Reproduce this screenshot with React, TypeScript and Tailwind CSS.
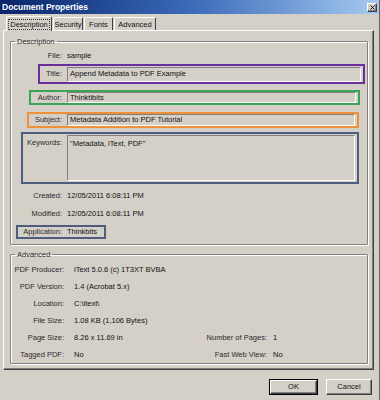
import { X } from "lucide-react";

const raised =
  "border border-t-white border-l-white border-b-[#404040] border-r-[#404040] shadow-[inset_-1px_-1px_0_#808080]";
const sunken = "border border-t-[#808080] border-l-[#808080] border-b-white border-r-white";

const Field = ({ label, value, w = 51 }: { label: string; value: string; w?: number }) => (
  <div className="flex items-center h-[10px]">
    <span className="text-right text-[#2a2a2a]" style={{ width: w }}>
      {label}
    </span>
    <span className="ml-[5px]">{value}</span>
  </div>
);

const Tab = ({ label, active, w }: { label: string; active?: boolean; w: number }) => (
  <div
    className={`flex items-center justify-center border-l border-t border-r border-l-white border-t-white border-r-[#404040] rounded-t-[2px] ${
      active ? "h-[15px] bg-[#d4d0c8] -mb-px z-10" : "h-[13px]"
    }`}
    style={{ width: w }}
  >
    <span className={active ? "outline outline-1 outline-dotted outline-[#333] px-[1px] leading-[9px]" : "leading-[9px]"}>
      {label}
    </span>
  </div>
);

export default function App() {
  return (
    <div className="w-[380px] h-[400px] bg-[#d4d0c8] flex flex-col overflow-hidden border-r border-r-[#606060] text-[7.5px] text-[#111] font-['Liberation_Sans',Arial,sans-serif]">
      {/* title bar */}
      <div className="h-[14px] flex items-center justify-between pl-[2px] pr-[2px] bg-gradient-to-r from-[#0a246a] via-[#3a6ab8] to-[#a6caf0]">
        <span className="text-white font-bold text-[8.5px]">Document Properties</span>
        <div className={`w-[10px] h-[9px] bg-[#d4d0c8] flex items-center justify-center ${raised}`}>
          <X size={7} strokeWidth={3} color="#000" />
        </div>
      </div>

      {/* tabs */}
      <div className="flex items-end pl-[6px] mt-[1px] h-[15px] gap-[1px]">
        <Tab label="Description" active w={46} />
        <Tab label="Security" w={30} />
        <Tab label="Fonts" w={29} />
        <Tab label="Advanced" w={42} />
      </div>

      {/* tab panel */}
      <div className="ml-[3px] mr-[5px] h-[340px] border border-t-white border-l-white border-b-[#404040] border-r-[#404040] shadow-[inset_-1px_-1px_0_#808080] flex flex-col pl-[6px] pr-[5px] pt-[6px]">
        <fieldset className="border border-[#808080] shadow-[inset_1px_1px_0_#fff,1px_1px_0_#fff] rounded-[1px] flex flex-col pb-[5px]">
          <legend className="ml-[4px] px-[2px] leading-[9px] text-[#2a2a2a]">Description</legend>
          <div className="mt-[5px]">
            <Field label="File:" value="sample" />
          </div>

          <div className="mt-[3px] ml-[27px] mr-[2px] h-[20px] border-2 border-[#6a2f9a] flex items-center pr-[2px]">
            <span className="w-[22px] text-right text-[#2a2a2a]">Title:</span>
            <div className={`ml-[5px] flex-1 h-[15px] flex items-center pl-[2px] ${sunken}`}>Append Metadata to PDF Example</div>
          </div>

          <div className="mt-[6px] ml-[18px] mr-[7px] h-[15px] border-2 border-[#3aa355] flex items-center pr-[2px]">
            <span className="w-[31px] text-right text-[#2a2a2a]">Author:</span>
            <div className={`ml-[5px] flex-1 h-[11px] flex items-center pl-[2px] ${sunken}`}>Thinktibits</div>
          </div>

          <div className="mt-[7px] ml-[16px] mr-[8px] h-[16px] border-2 border-[#f0913a] flex items-center pr-[2px]">
            <span className="w-[33px] text-right text-[#2a2a2a]">Subject:</span>
            <div className={`ml-[5px] flex-1 h-[12px] flex items-center pl-[2px] ${sunken}`}>Metadata Addition to PDF Tutorial</div>
          </div>

          <div className="mt-[4px] ml-[10px] mr-[8px] h-[52px] border-2 border-[#4c5d7e] flex items-start pr-[2px] pt-[1px] pb-[1px]">
            <span className="w-[39px] text-right text-[#2a2a2a] mt-[2px]">Keywords:</span>
            <div className={`ml-[5px] flex-1 h-full pl-[2px] pt-[2px] ${sunken}`}>"Metadata, iText, PDF"</div>
          </div>

          <div className="mt-[7px]">
            <Field label="Created:" value="12/05/2011 6:08:11 PM" />
          </div>
          <div className="mt-[8px]">
            <Field label="Modified:" value="12/05/2011 6:08:11 PM" />
          </div>

          <div className="mt-[6px] ml-[5px] w-[90px] h-[14px] border-2 border-[#4c5d7e] flex items-center">
            <span className="w-[44px] text-right text-[#2a2a2a]">Application:</span>
            <span className="ml-[5px]">Thinkbits</span>
          </div>
        </fieldset>

        <fieldset className="mt-[5px] border border-[#808080] shadow-[inset_1px_1px_0_#fff,1px_1px_0_#fff] rounded-[1px] flex flex-col pb-[3px]">
          <legend className="ml-[4px] px-[2px] leading-[9px] text-[#2a2a2a]">Advanced</legend>
          {[
            ["PDF Producer:", "iText 5.0.6 (c) 1T3XT BVBA", "", ""],
            ["PDF Version:", "1.4 (Acrobat 5.x)", "", ""],
            ["Location:", "C:\\itext\\", "", ""],
            ["File Size:", "1.08 KB (1,106 Bytes)", "", ""],
            ["Page Size:", "8.26 x 11.69 in", "Number of Pages:", "1"],
            ["Tagged PDF:", "No", "Fast Web View:", "No"],
          ].map(([l1, v1, l2, v2], i) => (
            <div key={l1} className={`flex items-center h-[10px] ${i === 0 ? "mt-[6px]" : "mt-[7px]"}`}>
              <span className="w-[53px] text-right text-[#2a2a2a]">{l1}</span>
              <span className="ml-[10px] w-[126px]">{v1}</span>
              <span className="w-[67px] text-right text-[#2a2a2a]">{l2}</span>
              <span className="ml-[6px]">{v2}</span>
            </div>
          ))}
        </fieldset>
      </div>

      {/* buttons */}
      <div className="flex justify-end gap-[8px] pr-[7px] mt-[9px]">
        <div className="border border-black">
          <div className={`w-[47px] h-[14px] flex items-center justify-center ${raised}`}>OK</div>
        </div>
        <div className={`w-[46px] h-[16px] flex items-center justify-center ${raised}`}>Cancel</div>
      </div>
    </div>
  );
}
